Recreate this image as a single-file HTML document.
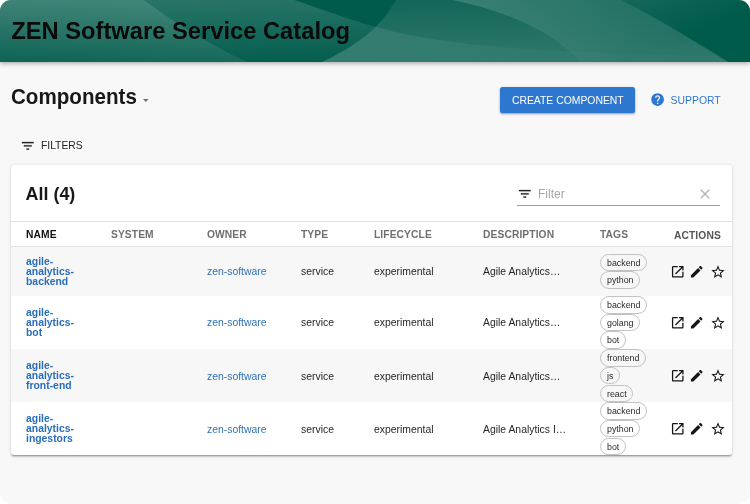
<!DOCTYPE html>
<html lang="en">
<head>
<meta charset="utf-8">
<title>ZEN Software Service Catalog</title>
<style>
*{box-sizing:border-box;margin:0;padding:0}
html,body{width:750px;height:504px;background:#fff;overflow:hidden}
body{font-family:"Liberation Sans",Arial,Helvetica,sans-serif;color:#1a1a1a;-webkit-font-smoothing:antialiased}
#app{will-change:transform;position:absolute;left:0;top:0;width:750px;height:504px;background:#f8f8f8;border-radius:11px 11px 12px 12px;overflow:hidden}
header{position:absolute;left:0;top:0;width:750px;height:62.4px;background:#005b4b;box-shadow:0 2px 4px rgba(0,0,0,.28);overflow:hidden}
header svg{position:absolute;left:0;top:0;width:750px;height:62.4px}
header h1{position:absolute;left:11.2px;top:17px;font-size:23.72px;line-height:28px;font-weight:700;color:#0a0a0a;white-space:nowrap;letter-spacing:0}
.h2{position:absolute;left:11px;top:83.55px;font-size:22.1px;line-height:26px;transform:scaleX(.932);transform-origin:0 0;font-weight:700;color:#181818;white-space:nowrap}
.caret{position:absolute;left:143.3px;top:98.9px;width:5.6px;height:3px}
.btn{position:absolute;left:500.2px;top:86.8px;width:135.2px;height:26.4px;border-radius:2.5px;background:#2e77d0;color:#fff;font-size:10.4px;line-height:28.6px;text-align:center;text-transform:uppercase;box-shadow:0 1px 3px rgba(0,0,0,.3),0 1px 1px rgba(0,0,0,.14)}
.support{position:absolute;left:670.6px;top:94.2px;font-size:10.4px;line-height:14px;color:#2e77d0;text-transform:uppercase}
.helpi{position:absolute;left:650.1px;top:92.2px;width:15.2px;height:15.2px}
.filters{position:absolute;left:41px;top:139.1px;font-size:10.3px;line-height:14px;color:#222}
.fi{position:absolute;left:19.8px;top:137.5px;width:15.6px;height:15.6px}
.card{position:absolute;left:11px;top:165.2px;width:721.4px;height:290px;background:#fff;border-radius:3px;box-shadow:0 2.2px 1px -1.5px rgba(0,0,0,.2),0 1.5px 1.5px rgba(0,0,0,.14),0 .75px 3.7px rgba(0,0,0,.12)}
.card h3{position:absolute;left:14.6px;top:17.7px;font-size:17.9px;line-height:22px;font-weight:700;color:#181818}
.search{position:absolute;left:506px;top:19px;width:203px;height:22px;border-bottom:1px solid #9c9c9c}
.search span{position:absolute;left:21px;top:2px;font-size:12px;line-height:16px;color:#a6a6a6}
.search .fi2{position:absolute;left:0.2px;top:2.3px;width:15.6px;height:15.6px}
.search .x{position:absolute;left:179.6px;top:1.8px;width:16px;height:16px}
.thead{position:absolute;left:0;top:55.4px;width:721.4px;height:26.4px;border-top:1px solid #e2e2e2;border-bottom:1px solid #e2e2e2}
.thead b{position:absolute;top:6.4px;font-size:10.25px;line-height:13px;font-weight:700;color:#6f6f6f;text-transform:uppercase;letter-spacing:.1px}
.thead b.on{color:#111}
.row{position:absolute;left:0;width:721.4px}
.row.g{background:#f7f7f7}
.row a,.row span.t{position:absolute;font-size:10.4px;line-height:11px;white-space:nowrap}
.row a.n{left:15px;font-weight:700;color:#2a6dbc;white-space:normal;width:120px;line-height:10.2px}
.row a.o{left:196px;color:#2f72b8}
.row span.t{color:#262626}
.chip{position:absolute;left:589.4px;height:17.4px;border:1px solid #c2c2c2;border-radius:9px;font-size:8.85px;line-height:16.6px;padding:0 5.6px;color:#2a2a2a;margin-top:-0.3px}
.ico{position:absolute;width:15.5px;height:15.5px;fill:#161616}
.ico.st{width:16px;height:16px}
</style>
</head>
<body>
<div id="app">
<header>
<svg viewBox="0 0 1368 400" preserveAspectRatio="xMidYMid slice" fill="none">
<defs>
<linearGradient id="p0" x1="602" x2="1093.5" y1="-960.5" y2="272" gradientUnits="userSpaceOnUse"><stop stop-color="#fff"/><stop offset="1" stop-color="#fff" stop-opacity="0"/></linearGradient>
<linearGradient id="p1" x1="482" x2="480" y1="1058.5" y2="70.5" gradientUnits="userSpaceOnUse"><stop stop-color="#fff"/><stop offset="1" stop-color="#fff" stop-opacity="0"/></linearGradient>
<linearGradient id="p2" x1="424" x2="446.1" y1="-587.5" y2="274.6" gradientUnits="userSpaceOnUse"><stop stop-color="#fff"/><stop offset="1" stop-color="#fff" stop-opacity="0"/></linearGradient>
<linearGradient id="p3" x1="587" x2="349" y1="-1120.5" y2="341" gradientUnits="userSpaceOnUse"><stop stop-color="#fff"/><stop offset="1" stop-color="#fff" stop-opacity="0"/></linearGradient>
</defs>
<path fill="url(#p0)" d="M437 116C223 116 112 0 112 0h1256v400c-82 0-225-21-282-109-112-175-436-175-649-175z"/>
<path fill="url(#p1)" d="M1368 400V282C891-29 788 40 711 161 608 324 121 372 0 361v39h1368z"/>
<path fill="url(#p2)" d="M1368 244v156H0V94c92-24 198-46 375 0l135 41c176 51 195 109 858 109z"/>
<path fill="url(#p3)" d="M1252 400h116c-14-7-35-14-116-16-663-14-837-128-1013-258l-85-61C98 28 46 8 0 0v400h1252z"/>
</svg>
<h1>ZEN Software Service Catalog</h1>
</header>

<div class="h2">Components</div><svg class="caret" viewBox="0 0 10 5"><path fill="#707070" d="M0 0h10L5 5z"/></svg>
<div class="btn">Create Component</div>
<svg class="helpi" viewBox="0 0 24 24"><path fill="#2e77d0" d="M12 2C6.48 2 2 6.48 2 12s4.48 10 10 10 10-4.480 10-10S17.520 2 12 2zm1 17h-2v-2h2v2zm2.070-7.750l-.9.920C13.450 12.900 13 13.500 13 15h-2v-.5c0-1.100.45-2.100 1.170-2.830l1.240-1.260c.37-.36.590-.86.590-1.410 0-1.100-.9-2-2-2s-2 .9-2 2H8c0-2.210 1.790-4 4-4s4 1.790 4 4c0 .88-.36 1.680-.93 2.250z"/></svg>
<div class="support">Support</div>

<svg class="fi" viewBox="0 0 24 24"><path fill="#222" stroke="#222" stroke-width=".3" d="M10 18h4v-2h-4v2zM3 6v2h18V6H3zm3 7h12v-2H6v2z"/></svg>
<div class="filters">FILTERS</div>

<div class="card">
<h3>All (4)</h3>
<div class="search">
<svg class="fi2" viewBox="0 0 24 24"><path fill="#222" stroke="#222" stroke-width=".3" d="M10 18h4v-2h-4v2zM3 6v2h18V6H3zm3 7h12v-2H6v2z"/></svg>
<span>Filter</span>
<svg class="x" viewBox="0 0 24 24"><path fill="#b2b2b2" d="M19 6.410L17.590 5 12 10.590 6.410 5 5 6.410 10.590 12 5 17.590 6.410 19 12 13.410 17.590 19 19 17.590 13.410 12z"/></svg>
</div>
<div class="thead">
<b class="on" style="left:15px">Name</b>
<b style="left:100px">System</b>
<b style="left:196px">Owner</b>
<b style="left:290px">Type</b>
<b style="left:363px">Lifecycle</b>
<b style="left:472px">Description</b>
<b style="left:589px">Tags</b>
<b style="left:663px;top:7.8px;color:#565656">Actions</b>
</div>

<div class="row g" style="top:82px;height:49px">
<a class="n" style="top:9.9px">agile-<br>analytics-<br>backend</a>
<a class="o" style="top:18.90px">zen-software</a>
<span class="t" style="left:290px;top:18.90px">service</span>
<span class="t" style="left:363px;top:18.90px">experimental</span>
<span class="t" style="left:472px;top:18.90px">Agile Analytics…</span>
<div class="chip" style="top:7px">backend</div>
<div class="chip" style="top:24.6px">python</div>
<svg class="ico" style="left:659.35px;top:16.95px" viewBox="0 0 24 24"><path d="M19 19H5V5h7V3H5c-1.11 0-2 .9-2 2v14c0 1.1.89 2 2 2h14c1.1 0 2-.9 2-2v-7h-2v7zM14 3v2h3.59l-9.83 9.83 1.41 1.41L19 6.41V10h2V3h-7z"/></svg>
<svg class="ico" style="left:678.35px;top:16.95px" viewBox="0 0 24 24"><path d="M3 17.25V21h3.750L17.810 9.940l-3.750-3.750L3 17.250zM20.710 7.040c.39-.39.39-1.020 0-1.410l-2.340-2.340a.996.996 0 0 0-1.410 0l-1.830 1.830 3.750 3.750 1.830-1.830z"/></svg>
<svg class="ico st" style="left:699px;top:16.7px" viewBox="0 0 24 24"><path d="M22 9.240l-7.190-.62L12 2 9.190 8.630 2 9.240l5.460 4.730L5.820 21 12 17.270 18.180 21l-1.630-7.030L22 9.240zM12 15.400l-3.760 2.270 1-4.280-3.320-2.880 4.380-.38L12 6.100l1.710 4.040 4.380.38-3.320 2.880 1 4.280L12 15.400z"/></svg>
</div>
<div class="row" style="top:131px;height:53px">
<a class="n" style="top:11.5px">agile-<br>analytics-<br>bot</a>
<a class="o" style="top:20.70px">zen-software</a>
<span class="t" style="left:290px;top:20.70px">service</span>
<span class="t" style="left:363px;top:20.70px">experimental</span>
<span class="t" style="left:472px;top:20.70px">Agile Analytics…</span>
<div class="chip" style="top:0.3px">backend</div>
<div class="chip" style="top:17.95px">golang</div>
<div class="chip" style="top:35.6px">bot</div>
<svg class="ico" style="left:659.35px;top:18.75px" viewBox="0 0 24 24"><path d="M19 19H5V5h7V3H5c-1.11 0-2 .9-2 2v14c0 1.1.89 2 2 2h14c1.1 0 2-.9 2-2v-7h-2v7zM14 3v2h3.59l-9.83 9.83 1.41 1.41L19 6.41V10h2V3h-7z"/></svg>
<svg class="ico" style="left:678.35px;top:18.75px" viewBox="0 0 24 24"><path d="M3 17.25V21h3.750L17.810 9.940l-3.750-3.750L3 17.250zM20.710 7.040c.39-.39.39-1.020 0-1.410l-2.340-2.340a.996.996 0 0 0-1.410 0l-1.830 1.830 3.750 3.750 1.830-1.830z"/></svg>
<svg class="ico st" style="left:699px;top:18.5px" viewBox="0 0 24 24"><path d="M22 9.240l-7.190-.62L12 2 9.190 8.630 2 9.240l5.460 4.730L5.820 21 12 17.270 18.180 21l-1.630-7.030L22 9.240zM12 15.400l-3.760 2.270 1-4.280-3.320-2.880 4.380-.38L12 6.100l1.710 4.040 4.380.38-3.320 2.880 1 4.280L12 15.400z"/></svg>
</div>
<div class="row g" style="top:184px;height:53px">
<a class="n" style="top:11.5px">agile-<br>analytics-<br>front-end</a>
<a class="o" style="top:21.7px">zen-software</a>
<span class="t" style="left:290px;top:21.7px">service</span>
<span class="t" style="left:363px;top:21.7px">experimental</span>
<span class="t" style="left:472px;top:21.7px">Agile Analytics…</span>
<div class="chip" style="top:0.4px">frontend</div>
<div class="chip" style="top:18.1px">js</div>
<div class="chip" style="top:35.75px">react</div>
<svg class="ico" style="left:659.35px;top:18.75px" viewBox="0 0 24 24"><path d="M19 19H5V5h7V3H5c-1.11 0-2 .9-2 2v14c0 1.1.89 2 2 2h14c1.1 0 2-.9 2-2v-7h-2v7zM14 3v2h3.59l-9.83 9.83 1.41 1.41L19 6.41V10h2V3h-7z"/></svg>
<svg class="ico" style="left:678.35px;top:18.75px" viewBox="0 0 24 24"><path d="M3 17.25V21h3.750L17.810 9.940l-3.750-3.750L3 17.250zM20.710 7.040c.39-.39.39-1.020 0-1.410l-2.340-2.340a.996.996 0 0 0-1.410 0l-1.830 1.830 3.750 3.750 1.830-1.830z"/></svg>
<svg class="ico st" style="left:699px;top:18.5px" viewBox="0 0 24 24"><path d="M22 9.240l-7.190-.62L12 2 9.190 8.630 2 9.240l5.460 4.730L5.820 21 12 17.270 18.180 21l-1.630-7.030L22 9.240zM12 15.400l-3.760 2.270 1-4.280-3.320-2.880 4.380-.38L12 6.100l1.710 4.040 4.380.38-3.320 2.880 1 4.280L12 15.400z"/></svg>
</div>
<div class="row" style="top:237px;height:53px">
<a class="n" style="top:11.5px">agile-<br>analytics-<br>ingestors</a>
<a class="o" style="top:21.7px">zen-software</a>
<span class="t" style="left:290px;top:21.7px">service</span>
<span class="t" style="left:363px;top:21.7px">experimental</span>
<span class="t" style="left:472px;top:21.7px">Agile Analytics I…</span>
<div class="chip" style="top:0.5px">backend</div>
<div class="chip" style="top:18.2px">python</div>
<div class="chip" style="top:35.85px">bot</div>
<svg class="ico" style="left:659.35px;top:18.75px" viewBox="0 0 24 24"><path d="M19 19H5V5h7V3H5c-1.11 0-2 .9-2 2v14c0 1.1.89 2 2 2h14c1.1 0 2-.9 2-2v-7h-2v7zM14 3v2h3.59l-9.83 9.83 1.41 1.41L19 6.41V10h2V3h-7z"/></svg>
<svg class="ico" style="left:678.35px;top:18.75px" viewBox="0 0 24 24"><path d="M3 17.25V21h3.750L17.810 9.940l-3.750-3.750L3 17.250zM20.710 7.040c.39-.39.39-1.020 0-1.410l-2.340-2.340a.996.996 0 0 0-1.410 0l-1.830 1.830 3.750 3.750 1.830-1.830z"/></svg>
<svg class="ico st" style="left:699px;top:18.5px" viewBox="0 0 24 24"><path d="M22 9.240l-7.190-.62L12 2 9.190 8.630 2 9.240l5.460 4.730L5.820 21 12 17.270 18.180 21l-1.630-7.030L22 9.240zM12 15.400l-3.760 2.270 1-4.280-3.320-2.880 4.380-.38L12 6.100l1.710 4.040 4.380.38-3.320 2.880 1 4.280L12 15.400z"/></svg>
</div>
</div>
</div>
</body>
</html>
